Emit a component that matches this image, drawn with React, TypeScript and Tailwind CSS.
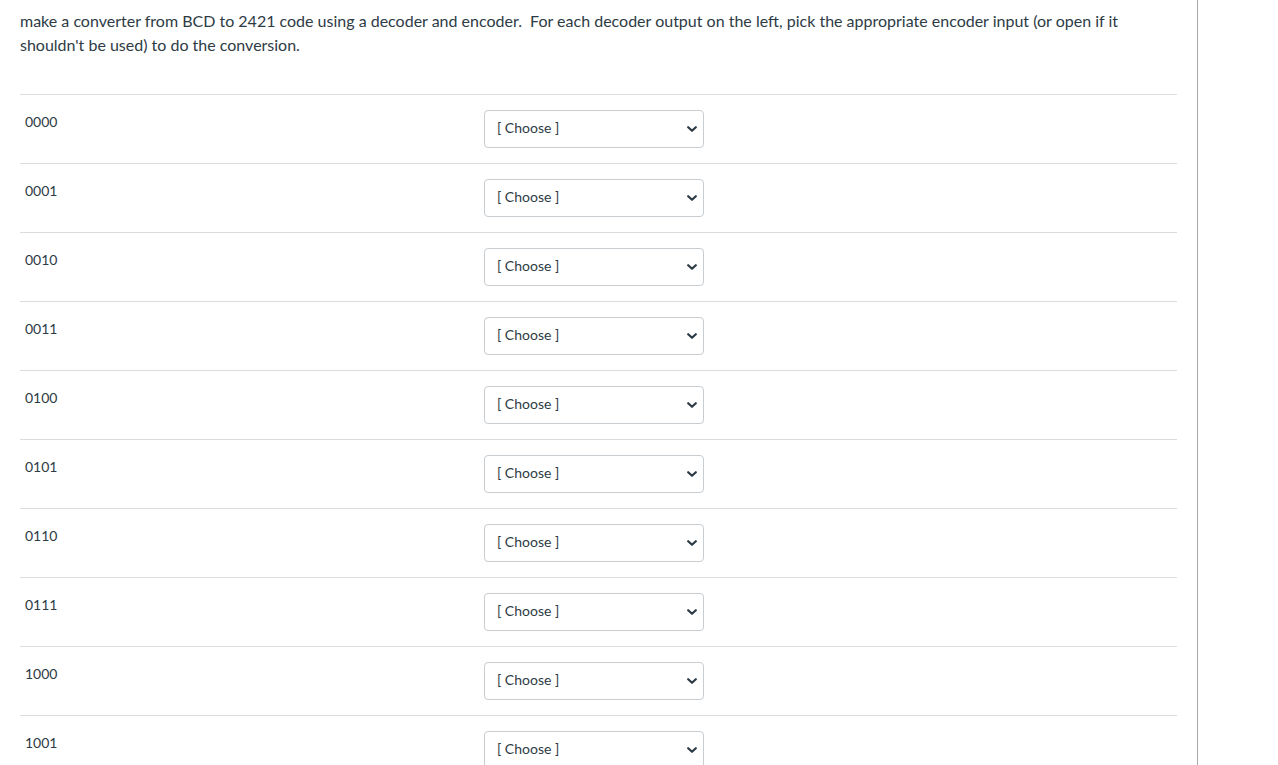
import React from "react";

const codes = ["0000","0001","0010","0011","0100","0101","0110","0111","1000","1001"];

function Chevron() {
  return (
    <svg width="10" height="7" viewBox="0 0 10 7" className="absolute right-[6px] top-[15px]">
      <path d="M1.2 1.2 L5 4.8 L8.8 1.2" fill="none" stroke="#2d3b45" strokeWidth="2.2" strokeLinecap="round" strokeLinejoin="round" />
    </svg>
  );
}

export default function App() {
  return (
    <div className="w-[1278px] h-[765px] overflow-hidden bg-white" style={{ fontFamily: "Lato, 'Liberation Sans', sans-serif" }}>
      <div className="w-[1198px] h-[765px] border-r border-[#a8a8a8] pl-[20px] pr-[20px] pt-[9px]">
        <p className="text-[16px] leading-[24px] text-[#2d3b45] w-[1120px]">
          make a converter from BCD to 2421 code using a decoder and encoder.&nbsp; For each decoder output on the left, pick the appropriate encoder input (or open if it shouldn't be used) to do the conversion.
        </p>
        <div className="mt-[37px]">
          {codes.map((c) => (
            <div key={c} className="flex border-t border-[#dcdcdc] h-[69px] pt-[15px]">
              <div className="w-[464px] pl-[5px] pt-[2px] text-[14px] leading-[20px] text-[#2d3b45]">{c}</div>
              <div className="relative w-[220px] h-[38px] border border-[#c7cdd1] rounded-[4px] bg-white">
                <span className="absolute left-[12px] top-[7px] text-[14px] leading-[20px] text-[#2d3b45]">[ Choose ]</span>
                <Chevron />
              </div>
            </div>
          ))}
        </div>
      </div>
    </div>
  );
}
